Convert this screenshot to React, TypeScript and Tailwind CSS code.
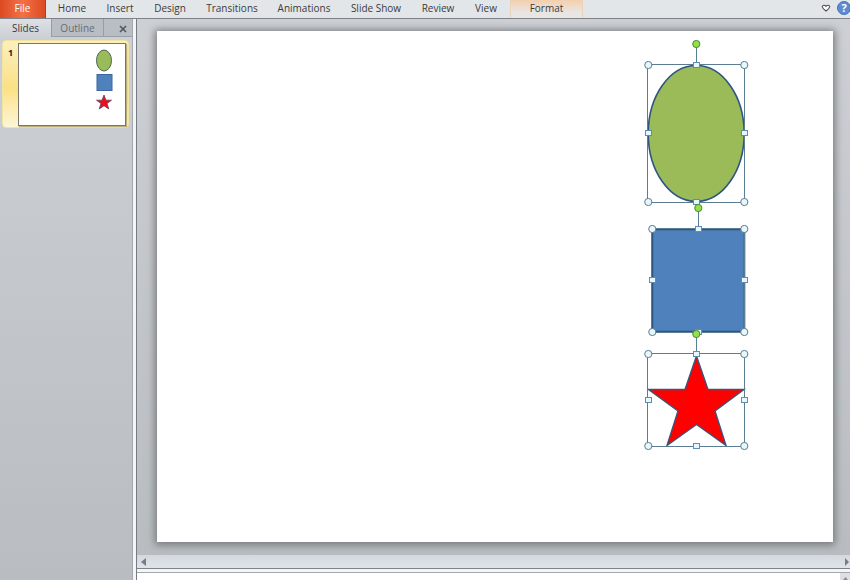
import { useState } from "react"

const ribbonTabs = [
  { label: "Home", width: "w-12" },
  { label: "Insert", width: "w-12" },
  { label: "Design", width: "w-13" },
  { label: "Transitions", width: "w-18" },
  { label: "Animations", width: "w-18" },
  { label: "Slide Show", width: "w-18" },
  { label: "Review", width: "w-13" },
  { label: "View", width: "w-11" },
]

type BoxProps = { x1: number; y1: number; x2: number; y2: number }

function Selection({ x1, y1, x2, y2, rotateY }: BoxProps & { rotateY: number }) {
  const cx = Math.round((x1 + x2) / 2)
  const cy = Math.floor((y1 + y2) / 2)
  const corners = [[x1, y1], [x2, y1], [x1, y2], [x2, y2]]
  const sides = [[cx, y1], [x1, cy], [x2, cy], [cx, y2]]

  return (
    <g stroke="#5b7d93">
      <rect x={x1 - 0.5} y={y1 - 0.5} width={x2 - x1 + 1} height={y2 - y1 + 1} fill="none" />
      <path d={`M${cx + 0.5} ${rotateY}V${y1}`} />
      {corners.map(([x, y]) => (
        <circle key={`${x}-${y}`} cx={x + 0.3} cy={y} r="3.6" fill="#e9f6fa" />
      ))}
      {sides.map(([x, y]) => (
        <rect key={`${x}-${y}`} x={x - 2.5} y={y - 2.5} width="6" height="5" fill="#e6f6fc" stroke="#5d8db0" />
      ))}
      <circle cx={cx + 0.3} cy={rotateY} r="3.6" fill="#92e04a" stroke="#4c8a2c" />
    </g>
  )
}

function SlideShapes() {
  return (
    <svg className="absolute top-[7px] right-[81px]" width="112" height="414" viewBox="0 0 112 414" aria-label="Selected shapes">
      <ellipse cx="56.2" cy="95.5" rx="48" ry="68" fill="#9bbb59" stroke="#2f5680" strokeWidth="1.6" />
      <Selection x1={8} y1={27} x2={104} y2={164} rotateY={6} />
      <rect x="12.5" y="191.5" width="92" height="102" fill="#4f81bd" stroke="#2f5680" strokeWidth="1.6" />
      <Selection x1={12} y1={191} x2={104} y2={294} rotateY={170} />
      <path
        d="M56.5 318L68 351.5H104L75 373L86 407.5L56.5 386.5L27 407.5L38 373L8.5 351.5H45Z"
        fill="#ff0000"
        stroke="#3f5278"
        strokeWidth="1.4"
      />
      <Selection x1={8} y1={316} x2={104} y2={408} rotateY={296} />
    </svg>
  )
}

function Thumbnail() {
  return (
    <button
      className="ml-0.5 mt-[3px] mr-[3px] flex h-22 rounded-sm border border-[#f3e3a0] bg-linear-to-b from-[#fbefbd] via-[#fbe184] via-55% to-[#fdf6d6] pt-0.5 pr-0.5"
      aria-label="Slide 1"
    >
      <span className="w-[15px] pt-1 text-center text-[9px] leading-3 font-bold text-[#222]">1</span>
      <span className="relative h-[83px] flex-1 border border-[#77776f] bg-white shadow-[1px_1px_1px_#b9ad75]">
        <svg className="absolute top-[5px] right-3" width="18" height="62" viewBox="0 0 18 62">
          <ellipse cx="9" cy="11.5" rx="7.5" ry="10.5" fill="#9bbb59" stroke="#48685a" />
          <rect x="2" y="25.5" width="15" height="16" fill="#4f81bd" stroke="#3c669e" />
          <path
            d="M9 46L10.9 51.2H16.5L12 54.5L13.8 60L9 56.7L4.2 60L6 54.5L1.5 51.2H7.1Z"
            fill="#f00a1a"
            stroke="#5a4162"
            strokeWidth=".8"
          />
        </svg>
      </span>
    </button>
  )
}

export default function App() {
  const [panel, setPanel] = useState("Slides")

  return (
    <div className="flex h-screen flex-col overflow-hidden bg-[#c0c4c9] font-['Open_Sans','Noto_Sans',sans-serif] text-[10px] text-[#3b3b3b]">
      {/* Ribbon tabs */}
      <nav className="flex h-[19px] shrink-0 border-b border-[#7f8389] bg-[#e2e6e9] leading-4" aria-label="Ribbon">
        <button className="mr-0.5 w-[46px] border-r border-[#b8391b] bg-linear-to-r from-[#dc4a22] via-[#f37144] to-[#dc4a22] pb-0.5 text-white">
          File
        </button>
        {ribbonTabs.map((tab) => (
          <button key={tab.label} className={`${tab.width} pb-0.5 whitespace-nowrap`}>
            {tab.label}
          </button>
        ))}
        <button className="ml-0.5 w-[73px] border-x border-[#ecd2bb] bg-linear-to-b from-[#f3cfae] to-[#e8e6e3] to-70% pb-0.5">
          Format
        </button>
        <div className="ml-auto flex items-center gap-1.5 pb-0.5">
          <button aria-label="Minimize the ribbon">
            <svg className="block" width="10" height="8" viewBox="0 0 10 8" fill="#fff" stroke="#4c4c4c" strokeWidth="1.1">
              <path d="M1.2 2.5Q2.5.2 5 2.2Q7.5.2 8.8 2.5Q8.5 4.5 5 7Q1.5 4.5 1.2 2.5Z" />
            </svg>
          </button>
          <button
            className="-mr-px size-3.5 rounded-full border border-[#4773b8] bg-[#5c8bd0] text-[11px] leading-3 font-bold text-white"
            aria-label="Help"
          >
            ?
          </button>
        </div>
      </nav>

      <div className="flex min-h-0 flex-1">
        {/* Slides / Outline pane */}
        <aside className="w-[132px] shrink-0 bg-linear-to-b from-[#cdd1d6] to-[#b9bdc2]">
          <div className="flex h-[18px] border-b border-[#9a9fa6] bg-[#b9bec5] leading-4">
            <button className="-mb-px w-[51px] bg-linear-to-b from-[#dde1e5] to-[#cdd1d6]" onClick={() => setPanel("Slides")} aria-pressed={panel === "Slides"}>
              Slides
            </button>
            <button className="w-[53px] border-x border-[#989da5] text-[#676c73]" onClick={() => setPanel("Outline")} aria-pressed={panel === "Outline"}>
              Outline
            </button>
            <button className="flex flex-1 items-center justify-center pt-0.5 pl-2.5" aria-label="Close pane">
              <svg width="8" height="8" viewBox="0 0 8 8" stroke="#555a61" strokeWidth="1.7">
                <path d="M1 1L7 7M7 1L1 7" />
              </svg>
            </button>
          </div>
          <div className="flex flex-col">
            <Thumbnail />
          </div>
        </aside>

        <div className="w-[5px] shrink-0 border-r border-l border-r-[#777c83] border-l-[#a5a9ae] bg-[#f4f5f6]" />

        <main className="flex min-w-0 flex-1 flex-col">
          <div className="flex min-h-0 flex-1 bg-linear-to-b from-[#cdd0d4] to-[#b9bdc1] pt-3 pr-[17px] pb-[13px] pl-5">
            <section className="relative flex-1 bg-white shadow-[0_1px_8px_2px_#74787c]" aria-label="Slide">
              <SlideShapes />
            </section>
          </div>
          {/* Horizontal scrollbar */}
          <div className="relative flex h-3.5 shrink-0 items-center justify-between border-b border-[#7f8389] bg-linear-to-b from-[#d3d8df] to-[#e0e4ea] pl-1">
            <button aria-label="Scroll left">
              <svg className="block" width="5" height="8" viewBox="0 0 5 8" fill="#777c85">
                <path d="M5 0V8L0 4Z" />
              </svg>
            </button>
            <button aria-label="Scroll right">
              <svg className="block" width="5" height="8" viewBox="0 0 5 8" fill="#777c85">
                <path d="M0 0V8L4 4Z" />
              </svg>
            </button>
          </div>
          {/* Notes */}
          <div className="h-[11px] shrink-0 bg-[#f4f5f6] pt-[3px]">
            <div className="flex h-2 justify-end border-t border-[#a3a6aa] bg-white">
              <div className="flex w-2.5 items-end justify-center bg-[#dcdfe4]">
                <svg width="5" height="3" viewBox="0 0 5 3" fill="#8a8e95">
                  <path d="M2.5 0L5 3H0Z" />
                </svg>
              </div>
            </div>
          </div>
        </main>
      </div>
    </div>
  )
}
